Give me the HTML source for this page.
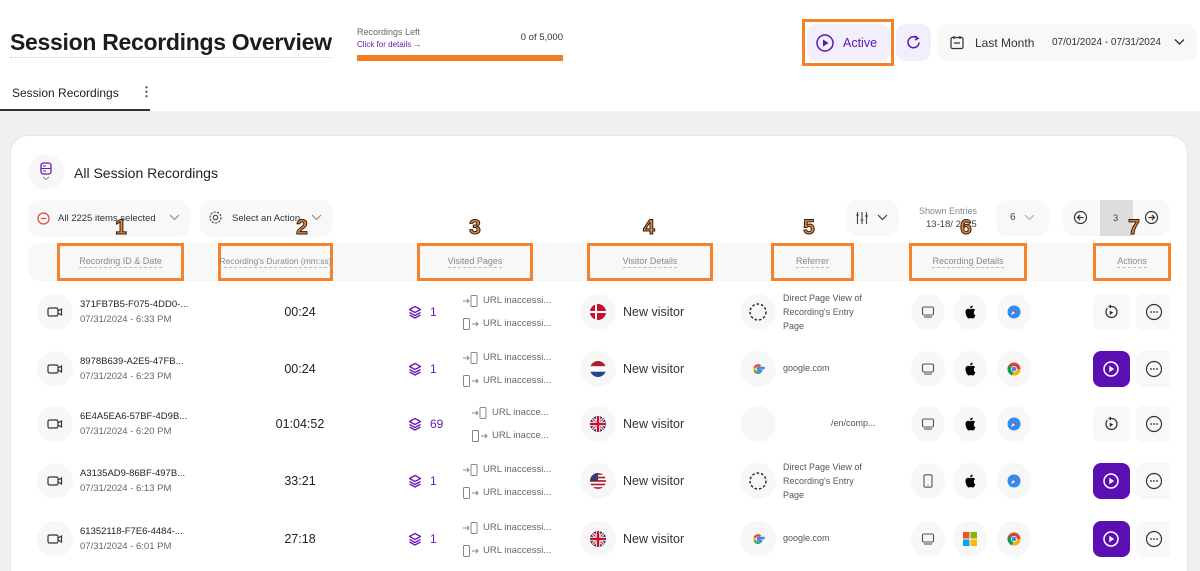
<!DOCTYPE html>
<html><head><meta charset="utf-8"><style>
*{box-sizing:border-box;margin:0;padding:0}
html,body{width:1200px;height:571px;overflow:hidden}
body{background:#fff;font-family:"Liberation Sans",sans-serif;color:#222;position:relative}
#wrap{position:absolute;left:0;top:0;width:1200px;height:571px;overflow:hidden}
.a{position:absolute}
.c{position:absolute;border-radius:50%;background:#f7f7f7;display:flex;align-items:center;justify-content:center}
.box{position:absolute;border:3px solid #f5822a;top:243px;height:38px;display:flex;align-items:center;justify-content:center}
.box span{font-size:9px;color:#888;border-bottom:1px dashed #bbb;padding-bottom:1px;white-space:nowrap}
.num{position:absolute;top:216px;font-size:21px;font-weight:bold;color:#f5822a;-webkit-text-stroke:1px #222;width:30px;text-align:center}
.btn{position:absolute;border-radius:12px;background:#f8f8f8}
</style></head><body><div id="wrap">
<div class="a" style="left:10px;top:29px;font-size:23px;font-weight:bold;color:#1c1c1c;letter-spacing:-0.3px">Session Recordings Overview</div>
<div class="a" style="left:10px;top:57px;width:322px;border-top:1px dotted #ccc"></div>
<div class="a" style="left:357px;top:27px;font-size:9px;color:#666">Recordings Left</div>
<div class="a" style="left:357px;top:40px;font-size:8px;color:#6a1bb3">Click for details →</div>
<div class="a" style="left:480px;top:32px;width:83px;text-align:right;font-size:9.5px;color:#333">0 of 5,000</div>
<div class="a" style="left:357px;top:55px;width:206px;height:6px;background:#f57c20"></div>

<div class="a" style="left:802px;top:19px;width:92px;height:47px;border:3px solid #f5822a"></div>
<div class="a" style="left:807px;top:24px;width:83px;height:37px;border-radius:10px;background:#f3eefc"></div>
<svg class="a" style="left:815px;top:33px" width="20" height="20" viewBox="0 0 20 20"><circle cx="10" cy="10" r="8" fill="none" stroke="#5b17b0" stroke-width="1.5"/><path d="M8 6.5v7l5.5-3.5z" fill="#5b17b0"/></svg>
<div class="a" style="left:843px;top:36px;font-size:12.5px;color:#5b17b0">Active</div>
<div class="a" style="left:896px;top:24px;width:35px;height:37px;border-radius:10px;background:#f3eefc"></div>
<svg class="a" style="left:905px;top:34px" width="17" height="17" viewBox="0 0 17 17"><path d="M12.5 4.5A5.5 5.5 0 1 0 14 8.5" fill="none" stroke="#5b17b0" stroke-width="1.5"/><path d="M10 2l3 2.5-3 1.5" fill="none" stroke="#5b17b0" stroke-width="1.5"/></svg>
<div class="a" style="left:938px;top:24px;width:259px;height:37px;border-radius:10px;background:#f8f8f8"></div>
<svg class="a" style="left:950px;top:35px" width="14" height="15" viewBox="0 0 14 15"><rect x="1" y="2.5" width="12" height="11" rx="1.5" fill="none" stroke="#333" stroke-width="1.2"/><path d="M4 1v3M10 1v3M4 8h6" stroke="#333" stroke-width="1.2"/></svg>
<div class="a" style="left:975px;top:36px;font-size:12px;color:#333">Last Month</div>
<div class="a" style="left:1052px;top:37px;font-size:10px;color:#333">07/01/2024 - 07/31/2024</div>
<svg class="a" style="left:1174px;top:38px" width="11" height="8" viewBox="0 0 11 8"><path d="M1 1.5l4.5 4.5 4.5-4.5" fill="none" stroke="#333" stroke-width="1.4"/></svg>

<div class="a" style="left:12px;top:86px;font-size:12px;color:#222">Session Recordings</div>
<div class="a" style="left:140px;top:84px;font-size:13px;color:#444;font-weight:bold">⋮</div>
<div class="a" style="left:0;top:109px;width:150px;height:2px;background:#333"></div>

<div class="a" style="left:0;top:111px;width:1200px;height:460px;background:#f0f0f0"></div>
<div class="a" style="left:10px;top:135px;width:1178px;height:460px;background:#fff;border-radius:18px;border:1px solid #e6e6e6"></div>

<div class="c" style="left:28px;top:154px;width:36px;height:36px"><svg width="16" height="20" viewBox="0 0 16 20"><rect x="3" y="1" width="10" height="11" rx="2.5" fill="none" stroke="#6a1bb3" stroke-width="1.3"/><path d="M3 6.5h10M5 4h3M5 9h3" stroke="#6a1bb3" stroke-width="1"/><path d="M5 15l3 2.5 3-2.5" fill="none" stroke="#888" stroke-width="1"/></svg></div>
<div class="a" style="left:74px;top:165px;font-size:14px;color:#222">All Session Recordings</div>

<div class="btn" style="left:28px;top:200px;width:162px;height:37px"></div>
<svg class="a" style="left:37px;top:212px" width="13" height="13" viewBox="0 0 13 13"><circle cx="6.5" cy="6.5" r="5.5" fill="none" stroke="#e0472f" stroke-width="1.2"/><path d="M3.8 6.5h5.4" stroke="#e0472f" stroke-width="1.2"/></svg>
<div class="a" style="left:58px;top:213px;font-size:9.5px;color:#333">All 2225 items selected</div>
<svg class="a" style="left:169px;top:214px" width="11" height="7" viewBox="0 0 11 7"><path d="M1 1l4.5 4.5L10 1" fill="none" stroke="#888" stroke-width="1.1"/></svg>
<div class="btn" style="left:200px;top:200px;width:133px;height:37px"></div>
<svg class="a" style="left:208px;top:210px" width="15" height="15" viewBox="0 0 15 15"><circle cx="7.5" cy="7.5" r="2.2" fill="none" stroke="#444" stroke-width="1.1"/><circle cx="7.5" cy="7.5" r="5.5" fill="none" stroke="#444" stroke-width="1.1" stroke-dasharray="2.2 1.2"/></svg>
<div class="a" style="left:232px;top:213px;font-size:9.5px;color:#333">Select an Action</div>
<svg class="a" style="left:311px;top:214px" width="11" height="7" viewBox="0 0 11 7"><path d="M1 1l4.5 4.5L10 1" fill="none" stroke="#888" stroke-width="1.1"/></svg>

<div class="btn" style="left:846px;top:200px;width:53px;height:36px"></div>
<svg class="a" style="left:855px;top:211px" width="14" height="14" viewBox="0 0 14 14"><path d="M2.5 1v12M7 1v12M11.5 1v12" stroke="#444" stroke-width="1.1"/><path d="M1 4h3M5.5 9h3M10 5h3" stroke="#444" stroke-width="1.1"/></svg>
<svg class="a" style="left:877px;top:214px" width="11" height="7" viewBox="0 0 11 7"><path d="M1 1l4.5 4.5L10 1" fill="none" stroke="#444" stroke-width="1.2"/></svg>
<div class="a" style="left:919px;top:206px;font-size:9px;color:#888">Shown Entries</div>
<div class="a" style="left:926px;top:219px;font-size:9.5px;color:#444">13-18/ 2225</div>
<div class="btn" style="left:996px;top:200px;width:53px;height:36px"></div>
<div class="a" style="left:1010px;top:212px;font-size:10px;color:#444">6</div>
<svg class="a" style="left:1024px;top:214px" width="11" height="7" viewBox="0 0 11 7"><path d="M1 1l4.5 4.5L10 1" fill="none" stroke="#aaa" stroke-width="1.1"/></svg>
<div class="btn" style="left:1063px;top:200px;width:107px;height:36px"></div>
<div class="a" style="left:1100px;top:200px;width:33px;height:36px;background:#ddd"></div>
<svg class="a" style="left:1073px;top:210px" width="15" height="15" viewBox="0 0 15 15"><circle cx="7.5" cy="7.5" r="6" fill="none" stroke="#333" stroke-width="1.2"/><path d="M10.5 7.5h-6M7 5l-2.5 2.5L7 10" fill="none" stroke="#333" stroke-width="1.2"/></svg>
<div class="a" style="left:1113px;top:213px;font-size:9.5px;color:#444">3</div>
<svg class="a" style="left:1144px;top:210px" width="15" height="15" viewBox="0 0 15 15"><circle cx="7.5" cy="7.5" r="6" fill="none" stroke="#333" stroke-width="1.2"/><path d="M4.5 7.5h6M8 5l2.5 2.5L8 10" fill="none" stroke="#333" stroke-width="1.2"/></svg>

<div class="a" style="left:28px;top:243px;width:1142px;height:38px;background:#f8f8f8;border-radius:10px"></div>
<div class="box" style="left:57px;width:127px"><span>Recording ID &amp; Date</span></div>
<div class="box" style="left:218px;width:115px"><span style="font-size:8.5px">Recording's Duration (mm:ss)</span></div>
<div class="box" style="left:417px;width:116px"><span>Visited Pages</span></div>
<div class="box" style="left:587px;width:126px"><span>Visitor Details</span></div>
<div class="box" style="left:771px;width:83px"><span>Referrer</span></div>
<div class="box" style="left:909px;width:118px"><span>Recording Details</span></div>
<div class="box" style="left:1093px;width:78px"><span>Actions</span></div>
<div class="num" style="left:106px">1</div>
<div class="num" style="left:287px">2</div>
<div class="num" style="left:460px">3</div>
<div class="num" style="left:634px">4</div>
<div class="num" style="left:794px">5</div>
<div class="num" style="left:951px">6</div>
<div class="num" style="left:1119px">7</div>

<svg width="0" height="0" style="position:absolute"><defs>
<symbol id="cam" viewBox="0 0 16 12"><rect x="1" y="2" width="10" height="8" rx="1.5" fill="none" stroke="#333" stroke-width="1.2"/><path d="M11 5l3.5-2v6L11 7" fill="none" stroke="#333" stroke-width="1.2"/></symbol>
<symbol id="lay" viewBox="0 0 14 14"><path d="M7 1.5l5.5 3-5.5 3-5.5-3z M1.5 7.5l5.5 3 5.5-3 M1.5 10l5.5 3 5.5-3" fill="none" stroke="#6a1bb3" stroke-width="1.3" stroke-linejoin="round"/></symbol>
<symbol id="in" viewBox="0 0 18 14"><path d="M1 7h6M5 5l2 2-2 2" fill="none" stroke="#888" stroke-width="1"/><rect x="9" y="1.5" width="6" height="11" rx="1" fill="none" stroke="#888" stroke-width="1"/></symbol>
<symbol id="out" viewBox="0 0 18 14"><rect x="1.5" y="1.5" width="6" height="11" rx="1" fill="none" stroke="#888" stroke-width="1"/><path d="M10 7h6M14 5l2 2-2 2" fill="none" stroke="#888" stroke-width="1"/></symbol>
<symbol id="mon" viewBox="0 0 14 12"><rect x="1.5" y="1" width="11" height="8" rx="1.5" fill="none" stroke="#555" stroke-width="1.1"/><path d="M3 11h8" stroke="#555" stroke-width="1.1"/></symbol>
<symbol id="app" viewBox="0 0 14 16"><path d="M9.5 1.5c-.8.1-1.8.7-2.2 1.6-.3.6-.2 1.3-.1 1.3.9 0 1.8-.6 2.2-1.4.3-.6.2-1.5.1-1.5z M10.8 8.5c0-1.7 1.4-2.5 1.4-2.5-.8-1.1-2-1.3-2.4-1.3-1-.1-2 .6-2.5.6s-1.300-.6-2.2-.6C3.9 4.7 2.5 5.8 2.5 8c0 3 2 6.5 3.3 6.5.7 0 1-.5 2-.5s1.2.5 2 .5c1 0 2.2-2.1 2.6-3.3-.2 0-1.6-.8-1.6-2.7z" fill="#000"/></symbol>
<symbol id="saf" viewBox="0 0 14 14"><circle cx="7" cy="7" r="6.5" fill="#2d8cf0"/><path d="M10 4L6 6 4 10 8 8z" fill="#fff"/><path d="M10 4L8 8 6 6z" fill="#e33"/></symbol>
<symbol id="chr" viewBox="0 0 14 14"><circle cx="7" cy="7" r="6.5" fill="#db4437"/><path d="M7 7L1.4 3.8A6.5 6.5 0 0 0 5 13.2z" fill="#0f9d58"/><path d="M7 7L5 13.2A6.5 6.5 0 0 0 13.5 7z" fill="#f4b400"/><circle cx="7" cy="7" r="3" fill="#fff"/><circle cx="7" cy="7" r="2.3" fill="#4285f4"/></symbol>
<symbol id="goo" viewBox="0 0 14 14"><path d="M12.8 7.2c0-.5 0-.9-.1-1.3H7v2.4h3.3a2.9 2.9 0 0 1-1.2 1.9" fill="none" stroke="#4285f4" stroke-width="2.2"/><path d="M9.1 10.2A3.6 3.6 0 0 1 3.6 8.3" fill="none" stroke="#34a853" stroke-width="2.2"/><path d="M3.6 8.3a3.8 3.8 0 0 1 0-2.5" fill="none" stroke="#fbbc05" stroke-width="2.2"/><path d="M3.6 5.8a3.6 3.6 0 0 1 5.8-1.6" fill="none" stroke="#ea4335" stroke-width="2.2"/></symbol>
<symbol id="rep" viewBox="0 0 16 16"><path d="M4.5 4.2A5.5 5.5 0 1 0 8 2.5" fill="none" stroke="#333" stroke-width="1.3"/><path d="M8 0.5v4L5 2.5z" fill="#333"/><path d="M6.7 6.5v4.5l3.6-2.2z" fill="#333"/></symbol>
<symbol id="dots" viewBox="0 0 18 18"><circle cx="9" cy="9" r="7.5" fill="none" stroke="#333" stroke-width="1.2"/><circle cx="6" cy="9" r=".9" fill="#333"/><circle cx="9" cy="9" r=".9" fill="#333"/><circle cx="12" cy="9" r=".9" fill="#333"/></symbol>
<symbol id="play" viewBox="0 0 18 18"><circle cx="9" cy="9" r="7" fill="none" stroke="#fff" stroke-width="1.5"/><path d="M7.3 5.8v6.4l4.8-3.2z" fill="#fff"/></symbol>
<symbol id="dash" viewBox="0 0 20 20"><circle cx="10" cy="10" r="8" fill="none" stroke="#222" stroke-width="1.4" stroke-dasharray="2.5 2"/></symbol>
<symbol id="dk" viewBox="0 0 16 16"><circle cx="8" cy="8" r="8" fill="#c8102e"/><path d="M0 8h16M6 0v16" stroke="#fff" stroke-width="2"/></symbol>
<symbol id="nl" viewBox="0 0 16 16"><clipPath id="cl"><circle cx="8" cy="8" r="8"/></clipPath><g clip-path="url(#cl)"><rect width="16" height="5.3" fill="#ae1c28"/><rect y="5.3" width="16" height="5.4" fill="#fff"/><rect y="10.7" width="16" height="5.3" fill="#21468b"/></g></symbol>
<symbol id="uk" viewBox="0 0 16 16"><clipPath id="cu"><circle cx="8" cy="8" r="8"/></clipPath><g clip-path="url(#cu)"><rect width="16" height="16" fill="#012169"/><path d="M0 0l16 16M16 0L0 16" stroke="#fff" stroke-width="3"/><path d="M0 0l16 16M16 0L0 16" stroke="#c8102e" stroke-width="1"/><path d="M8 0v16M0 8h16" stroke="#fff" stroke-width="4.5"/><path d="M8 0v16M0 8h16" stroke="#c8102e" stroke-width="2.5"/></g></symbol>
<symbol id="us" viewBox="0 0 16 16"><clipPath id="cs"><circle cx="8" cy="8" r="8"/></clipPath><g clip-path="url(#cs)"><rect width="16" height="16" fill="#fff"/><path d="M0 1h16M0 4.5h16M0 8h16M0 11.5h16M0 15h16" stroke="#b22234" stroke-width="1.7"/><rect width="8" height="8" fill="#3c3b6e"/></g></symbol>
<symbol id="ms" viewBox="0 0 14 14"><rect x="0" y="0" width="6.5" height="6.5" fill="#f25022"/><rect x="7.5" y="0" width="6.5" height="6.5" fill="#7fba00"/><rect x="0" y="7.5" width="6.5" height="6.5" fill="#00a4ef"/><rect x="7.5" y="7.5" width="6.5" height="6.5" fill="#ffb900"/></symbol>
<symbol id="ph" viewBox="0 0 10 14"><rect x="1" y="0.8" width="8" height="12.4" rx="1.5" fill="none" stroke="#555" stroke-width="1.1"/><path d="M4.5 11h1" stroke="#555"/></symbol>
</defs></svg>

<div id="rows"></div>
</div>
<script>
var rows=[
[312,"371FB7B5-F075-4DD0-...","6:33 PM","00:24","1","dk","dash",["Direct Page View of","Recording's Entry","Page"],"mon","app","saf",false],
[369,"8978B639-A2E5-47FB...","6:23 PM","00:24","1","nl","goo",["google.com"],"mon","app","chr",true],
[424,"6E4A5EA6-57BF-4D9B...","6:20 PM","01:04:52","69","uk","",["/en/comp..."],"mon","app","saf",false],
[481,"A3135AD9-86BF-497B...","6:13 PM","33:21","1","us","dash",["Direct Page View of","Recording's Entry","Page"],"ph","app","saf",true],
[539,"61352118-F7E6-4484-...","6:01 PM","27:18","1","uk","goo",["google.com"],"mon","ms","chr",true]];
var h="";
function u(id,x,y,w,hh){return '<svg class="a" style="left:'+x+'px;top:'+y+'px" width="'+w+'" height="'+hh+'"><use href="#'+id+'"/></svg>';}
rows.forEach(function(r){var y=r[0];
h+='<div class="c" style="left:37px;top:'+(y-18)+'px;width:36px;height:36px"></div>'+u("cam",47,y-6,16,12);
h+='<div class="a" style="left:80px;top:'+(y-13)+'px;font-size:9.5px;color:#222">'+r[1]+'</div>';
h+='<div class="a" style="left:80px;top:'+(y+2)+'px;font-size:9.5px;color:#666">07/31/2024 - '+r[2]+'</div>';
h+='<div class="a" style="left:230px;width:140px;text-align:center;top:'+(y-7)+'px;font-size:12.5px;color:#222">'+r[3]+'</div>';
var long=r[4]=="69";
h+=u("lay",408,y-7,14,14)+'<div class="a" style="left:430px;top:'+(y-7)+'px;font-size:12px;color:#6a1bb3">'+r[4]+'</div>';
var ux=long?471:462;var t=long?"URL inacce...":"URL inaccessi...";
h+=u("in",ux,y-18,18,14)+'<div class="a" style="left:'+(ux+21)+'px;top:'+(y-17)+'px;font-size:9.5px;color:#666">'+t+'</div>';
h+=u("out",ux,y+5,18,14)+'<div class="a" style="left:'+(ux+21)+'px;top:'+(y+6)+'px;font-size:9.5px;color:#666">'+t+'</div>';
h+='<div class="c" style="left:580px;top:'+(y-18)+'px;width:36px;height:36px"></div>'+u(r[5],590,y-8,16,16);
h+='<div class="a" style="left:623px;top:'+(y-7)+'px;font-size:12.5px;color:#333">New visitor</div>';
h+='<div class="c" style="left:740px;top:'+(y-18)+'px;width:36px;height:36px"></div>';
if(r[6]=="dash")h+=u("dash",748,y-10,20,20);
if(r[6]=="goo")h+=u("goo",751,y-7,14,14);
if(r[7].length==3){r[7].forEach(function(s,i){h+='<div class="a" style="left:783px;top:'+(y-19+i*14)+'px;font-size:9px;color:#555">'+s+'</div>';});}
else if(r[7][0]=="google.com")h+='<div class="a" style="left:783px;top:'+(y-6)+'px;font-size:9px;color:#555">google.com</div>';
else h+='<div class="a" style="left:831px;top:'+(y-6)+'px;font-size:9px;color:#555">/en/comp...</div>';
[[928,r[8]],[970,r[9]],[1014,r[10]]].forEach(function(q){h+='<div class="c" style="left:'+(q[0]-17)+'px;top:'+(y-18)+'px;width:34px;height:36px"></div>';
var w=q[1]=="ph"?10:14,hh=q[1]=="ph"?14:(q[1]=="mon"?12:(q[1]=="app"?16:14));h+=u(q[1],q[0]-w/2,y-hh/2,w,hh);});
if(r[11])h+='<div class="a" style="left:1093px;top:'+(y-18)+'px;width:37px;height:36px;border-radius:8px;background:#5b0fb3"></div>'+u("play",1102,y-9,18,18);
else h+='<div class="a" style="left:1093px;top:'+(y-18)+'px;width:37px;height:36px;border-radius:8px;background:#f8f8f8"></div>'+u("rep",1103,y-8,16,16);
h+='<div class="a" style="left:1136px;top:'+(y-18)+'px;width:34px;height:36px;border-radius:8px 0 0 8px;background:#f8f8f8"></div>'+u("dots",1145,y-9,18,18);
});
document.getElementById("rows").innerHTML=h;
</script>
</body></html>
